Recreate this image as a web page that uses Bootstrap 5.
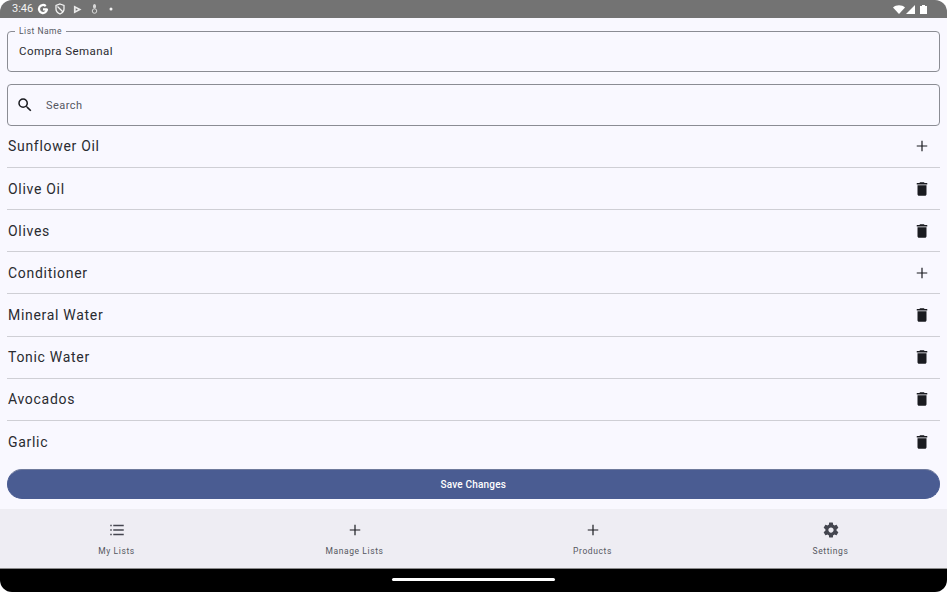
<!DOCTYPE html>
<html lang="en">
<head>
    <meta charset="UTF-8">
    <meta name="viewport" content="width=device-width, initial-scale=1.0">
    <title>Edit List</title>
    <link href="https://cdn.jsdelivr.net/npm/bootstrap@5.3.2/dist/css/bootstrap.min.css" rel="stylesheet">
    <style>
        html, body { height: 100%; background: #fff; }
        body { font-family: Roboto, sans-serif; color: #1a1b20; overflow: hidden; }
        .screen { width: 947px; height: 592px; border-radius: 12px; overflow: hidden; background: #f9f8ff; }
        .status-bar { height: 18px; background: #737373; color: #f4f4f4; font-size: 11px; padding: 0 20px 0 12px; }
        .status-bar svg { display: block; }
        .page-body { height: 491px; padding: 13px 7.5px 10px 7px; }
        .field-box { border: 1px solid #8b8c94; border-radius: 4px; padding-left: 11px; }
        .name-box { height: 41px; font-size: 11.5px; letter-spacing: .42px; color: #2a2b30; padding-top: 1px; position: relative; }
        .name-label { position: absolute; left: 7px; top: -6px; padding: 0 4px; background: #f9f8ff; font-size: 8.5px; line-height: 11px; letter-spacing: .5px; color: #55575f; }
        .search-box { height: 42px; margin-top: 12px; font-size: 11px; letter-spacing: .45px; color: #55575f; gap: 12px; padding-left: 8px; }
        .search-box span { padding-top: 2px; }
        .item-row { height: 42.2px; font-size: 14px; letter-spacing: .7px; color: #2a2b30; border-bottom: 1px solid #cfcfd5; padding: 1px 9px 0 1px; }
        .item-row svg { margin-top: -1px; }
        .last-row { border-bottom: 0; }
        .save-btn { height: 30px; margin-top: 6px; background: #4a5c92; border: 1px solid #4a5c92; border-top-color: #6f7a9c; color: #fff; font-size: 10px; font-weight: 500; letter-spacing: .2px; }
        .save-btn:hover { background: #4a5c92; color: #fff; }
        .bottom-nav { height: 60px; background: #eeedf3; border-bottom: 1px solid #8a8a8a; }
        .nav-cell { width: 238px; flex-shrink: 0; font-size: 8.5px; letter-spacing: .6px; color: #55575f; padding-top: 12px; }
        .nav-cell svg { display: block; margin-bottom: 6px; }
        .gesture-bar { height: 23px; background: #000; padding-top: 9px; }
        .gesture-pill { width: 163px; height: 3px; border-radius: 2px; background: #fff; }
    </style>
</head>
<body>
    <div class="screen d-flex flex-column">
        <!-- status bar -->
        <div class="status-bar d-flex align-items-center justify-content-between">
            <div class="d-flex align-items-center">
                <span>3:46</span>
                <svg style="margin-left:4px" width="12" height="12" viewBox="0 0 24 24" fill="none" stroke="#fff" stroke-width="4.5"><path d="M20 12a8 8 0 1 1-2.5-5.8M12 12.5h9"/></svg>
                <svg style="margin-left:6px" width="10" height="12" viewBox="0 0 20 24" fill="none" stroke="#f2f2f2" stroke-width="2.6"><path d="M10 2l8 3v7c0 5-3.5 8-8 10-4.5-2-8-5-8-10V5zM5 7l10 10"/></svg>
                <svg style="margin-left:8px" width="9" height="9" viewBox="0 0 20 20" fill="#e8e8e8"><path d="M2 1l17 9-17 9zM6 7v6l5-3z" fill-rule="evenodd"/></svg>
                <svg style="margin-left:9px" width="7" height="10" viewBox="0 0 14 20" fill="none" stroke="#d8d8d8" stroke-width="2"><rect x="5" y="1" width="4" height="7" rx="2" fill="#d8d8d8"/><circle cx="7" cy="14" r="4.5"/></svg>
                <svg style="margin-left:11px" width="4" height="4" viewBox="0 0 4 4" fill="#f2f2f2"><circle cx="2" cy="2" r="1.5"/></svg>
            </div>
            <div class="d-flex align-items-center">
                <svg width="12" height="9" viewBox="0 0 24 18" fill="#fff"><path d="M0 5C6-1 18-1 24 5L12 18z"/></svg>
                <svg style="margin-left:1px" width="9" height="9" viewBox="0 0 18 18" fill="#fff"><path d="M18 0v18H0z"/></svg>
                <svg style="margin-left:5px" width="7" height="9" viewBox="0 0 14 18" fill="#fff"><path d="M4 2V0h6v2h4v16H0V2z"/></svg>
            </div>
        </div>

        <div class="page-body d-flex flex-column">
            <div class="field-box name-box d-flex align-items-center">
                <span class="name-label">List Name</span>
                <span>Compra Semanal</span>
            </div>
            <div class="field-box search-box d-flex align-items-center">
                <svg width="18" height="18" viewBox="0 0 24 24" fill="#1a1b20"><path d="M15.5 14h-.79l-.28-.27A6.47 6.47 0 0 0 16 9.5 6.5 6.5 0 1 0 9.5 16c1.61 0 3.09-.59 4.23-1.57l.27.28v.79l5 4.99L20.49 19zm-6 0C7.01 14 5 11.99 5 9.5S7.01 5 9.5 5 14 7.01 14 9.5 11.99 14 9.5 14z"/></svg>
                <span>Search</span>
            </div>

            <div class="item-row d-flex align-items-center justify-content-between">
                <span>Sunflower Oil</span>
                <svg width="18" height="18" viewBox="0 0 24 24" fill="#1a1b20"><path d="M19 12.8h-6.2V19h-1.600v-6.200H5v-1.600h6.200V5h1.600v6.200H19z"/></svg>
            </div>
            <div class="item-row d-flex align-items-center justify-content-between">
                <span>Olive Oil</span>
                <svg width="18" height="18" viewBox="0 0 24 24" fill="#1a1b20"><path d="M6 19c0 1.1.9 2 2 2h8c1.1 0 2-.9 2-2V7H6zM19 4h-3.5l-1-1h-5l-1 1H5v2h14z"/></svg>
            </div>
            <div class="item-row d-flex align-items-center justify-content-between">
                <span>Olives</span>
                <svg width="18" height="18" viewBox="0 0 24 24" fill="#1a1b20"><path d="M6 19c0 1.1.9 2 2 2h8c1.1 0 2-.9 2-2V7H6zM19 4h-3.5l-1-1h-5l-1 1H5v2h14z"/></svg>
            </div>
            <div class="item-row d-flex align-items-center justify-content-between">
                <span>Conditioner</span>
                <svg width="18" height="18" viewBox="0 0 24 24" fill="#1a1b20"><path d="M19 12.8h-6.2V19h-1.600v-6.200H5v-1.600h6.200V5h1.600v6.200H19z"/></svg>
            </div>
            <div class="item-row d-flex align-items-center justify-content-between">
                <span>Mineral Water</span>
                <svg width="18" height="18" viewBox="0 0 24 24" fill="#1a1b20"><path d="M6 19c0 1.1.9 2 2 2h8c1.1 0 2-.9 2-2V7H6zM19 4h-3.5l-1-1h-5l-1 1H5v2h14z"/></svg>
            </div>
            <div class="item-row d-flex align-items-center justify-content-between">
                <span>Tonic Water</span>
                <svg width="18" height="18" viewBox="0 0 24 24" fill="#1a1b20"><path d="M6 19c0 1.1.9 2 2 2h8c1.1 0 2-.9 2-2V7H6zM19 4h-3.5l-1-1h-5l-1 1H5v2h14z"/></svg>
            </div>
            <div class="item-row d-flex align-items-center justify-content-between">
                <span>Avocados</span>
                <svg width="18" height="18" viewBox="0 0 24 24" fill="#1a1b20"><path d="M6 19c0 1.1.9 2 2 2h8c1.1 0 2-.9 2-2V7H6zM19 4h-3.5l-1-1h-5l-1 1H5v2h14z"/></svg>
            </div>
            <div class="item-row last-row d-flex align-items-center justify-content-between">
                <span>Garlic</span>
                <svg width="18" height="18" viewBox="0 0 24 24" fill="#1a1b20"><path d="M6 19c0 1.1.9 2 2 2h8c1.1 0 2-.9 2-2V7H6zM19 4h-3.5l-1-1h-5l-1 1H5v2h14z"/></svg>
            </div>

            <button type="button" class="btn save-btn rounded-pill w-100 p-0">Save Changes</button>
        </div>

        <div class="bottom-nav d-flex justify-content-center">
            <div class="nav-cell d-flex flex-column align-items-center">
                <svg width="18" height="18" viewBox="0 0 24 24" fill="#44464f"><path d="M3 5h2v2H3zM3 11h2v2H3zM3 17h2v2H3zM7 5h14v2H7zM7 11h14v2H7zM7 17h14v2H7z"/></svg>
                <span>My Lists</span>
            </div>
            <div class="nav-cell d-flex flex-column align-items-center">
                <svg width="18" height="18" viewBox="0 0 24 24" fill="#1a1b20"><path d="M19 12.8h-6.2V19h-1.600v-6.200H5v-1.600h6.200V5h1.600v6.200H19z"/></svg>
                <span>Manage Lists</span>
            </div>
            <div class="nav-cell d-flex flex-column align-items-center">
                <svg width="18" height="18" viewBox="0 0 24 24" fill="#1a1b20"><path d="M19 12.8h-6.2V19h-1.600v-6.200H5v-1.600h6.200V5h1.600v6.200H19z"/></svg>
                <span>Products</span>
            </div>
            <div class="nav-cell d-flex flex-column align-items-center">
                <svg width="18" height="18" viewBox="0 0 24 24" fill="#44464f"><path d="M19.43 12.98c.04-.32.07-.64.07-.98s-.03-.66-.07-.98l2.11-1.65c.19-.15.24-.42.12-.64l-2-3.46c-.12-.22-.39-.3-.61-.22l-2.49 1c-.52-.4-1.08-.73-1.69-.98l-.38-2.65A.49.49 0 0 0 14 2h-4c-.25 0-.46.18-.49.42l-.38 2.65c-.61.25-1.17.59-1.69.98l-2.49-1c-.23-.09-.49 0-.61.22l-2 3.46c-.13.22-.07.49.12.64l2.11 1.65c-.04.32-.07.65-.07.98s.03.66.07.98l-2.11 1.65c-.19.15-.24.42-.12.64l2 3.46c.12.22.39.3.61.22l2.49-1c.52.4 1.08.73 1.69.98l.38 2.65c.03.24.24.42.49.42h4c.25 0 .46-.18.49-.42l.38-2.65c.61-.25 1.17-.59 1.69-.98l2.49 1c.23.09.49 0 .61-.22l2-3.46c.12-.22.07-.49-.12-.64zM12 15.5c-1.93 0-3.5-1.57-3.5-3.5s1.57-3.5 3.5-3.5 3.5 1.57 3.5 3.5-1.57 3.5-3.5 3.5z"/></svg>
                <span>Settings</span>
            </div>
        </div>

        <div class="gesture-bar d-flex justify-content-center">
            <div class="gesture-pill"></div>
        </div>
    </div>

    <script src="https://cdn.jsdelivr.net/npm/bootstrap@5.3.2/dist/js/bootstrap.bundle.min.js"></script>
</body>
</html>
